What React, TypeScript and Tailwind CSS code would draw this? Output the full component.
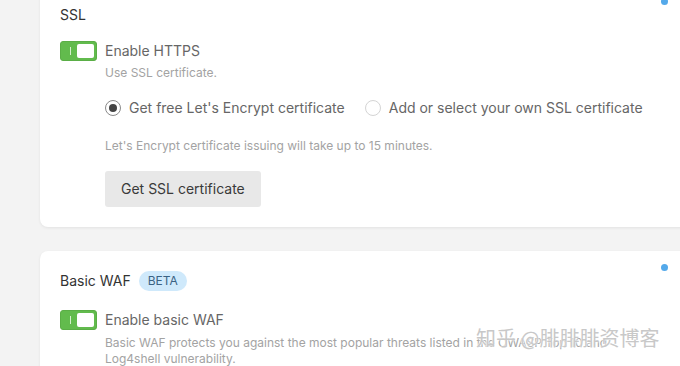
import React from 'react';

function Toggle() {
  return (
    <div className="relative h-5 w-[37px] shrink-0 rounded-[3px] border border-[#5aae46] bg-[#62bb4d]">
      <span className="absolute left-[9px] top-[5px] h-2 w-px bg-[#d4f0cc]" />
      <span className="absolute right-[2px] top-[2px] h-[14px] w-[17px] rounded-[2px] bg-white" />
    </div>
  );
}

function Radio({ checked, label }: { checked?: boolean; label: string }) {
  return (
    <label className="flex items-center gap-2">
      <span
        className={`flex h-4 w-4 items-center justify-center rounded-full border bg-white ${
          checked ? 'border-[#8a8a8a]' : 'border-[#d4d4d4]'
        }`}
      >
        {checked && <span className="h-2 w-2 rounded-full bg-[#444]" />}
      </span>
      <span className="text-sm leading-5 text-[#666]">{label}</span>
    </label>
  );
}

function Card({ children, className = '' }: { children: React.ReactNode; className?: string }) {
  return (
    <div
      className={`relative ml-10 w-[680px] rounded-lg bg-white px-5 pb-5 pt-5 shadow-[0_1px_3px_rgba(0,0,0,0.07)] ${className}`}
    >
      <span className="absolute left-[621px] top-[13px] h-[7px] w-[7px] rounded-full bg-[#54a9ea]" />
      {children}
    </div>
  );
}

export default function App() {
  return (
    <div
      className="relative h-[366px] w-[680px] overflow-hidden bg-[#f3f3f3]"
      style={{ fontFamily: 'Inter, "Noto Sans", sans-serif' }}
    >
      <Card className="mt-[-15px]">
        <div className="text-sm leading-5 text-[#333]">SSL</div>
        <div className="mt-4 flex items-center gap-2">
          <Toggle />
          <span className="text-sm leading-5 text-[#666]">Enable HTTPS</span>
        </div>
        <div className="ml-[45px] mt-1 text-xs leading-4 text-[#a3a3a3]">Use SSL certificate.</div>
        <div className="ml-[45px] mt-[17px] flex items-center gap-5">
          <Radio checked label="Get free Let's Encrypt certificate" />
          <Radio label="Add or select your own SSL certificate" />
        </div>
        <div className="ml-[45px] mt-5 text-xs leading-4 text-[#a3a3a3]">
          Let's Encrypt certificate issuing will take up to 15 minutes.
        </div>
        <button className="ml-[45px] mt-[17px] h-9 rounded-[3px] bg-[#e8e8e8] px-4 text-sm text-[#3a3a3a]">
          Get SSL certificate
        </button>
      </Card>

      <Card className="mt-6">
        <div className="flex items-center gap-2">
          <span className="text-sm leading-5 text-[#333]">Basic WAF</span>
          <span className="rounded-full bg-[#cfe9fb] px-[9px] text-xs leading-5 text-[#3a6283]">BETA</span>
        </div>
        <div className="mt-[19px] flex items-center gap-2">
          <Toggle />
          <span className="text-sm leading-5 text-[#666]">Enable basic WAF</span>
        </div>
        <div className="ml-[45px] mt-[5px] w-[560px] text-xs leading-4 text-[#a3a3a3]">
          Basic WAF protects you against the most popular threats listed in the OWASP Top 10 and
          Log4shell vulnerability.
        </div>
      </Card>

      <div
        className="absolute left-[476px] top-[324px] text-[20px] leading-7 text-[#c8c8c8]"
        style={{
          fontFamily: '"Noto Sans CJK SC", sans-serif',
          textShadow: '0 0 2px #fff, 0 0 2px #fff',
        }}
      >
        知乎 @腓腓腓资博客
      </div>
    </div>
  );
}
